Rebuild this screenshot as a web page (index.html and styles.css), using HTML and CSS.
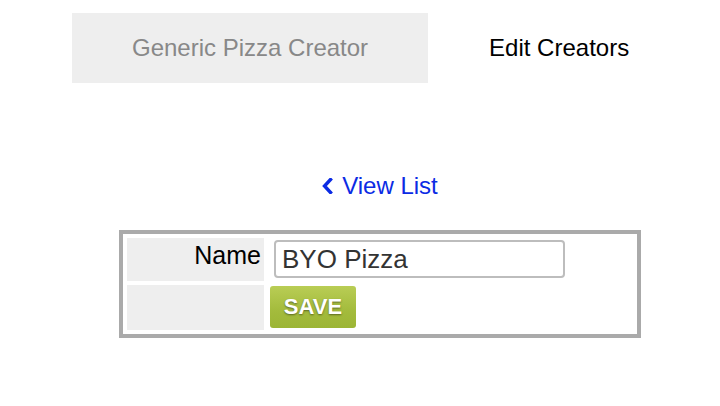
FILE: index.html
```html
<!DOCTYPE html>
<html>
<head>
<meta charset="utf-8">
<link rel="stylesheet" href="styles.css">
</head>
<body>
<div class="page">
  <nav class="tabs">
    <a class="tab tab-inactive">Generic Pizza Creator</a>
    <a class="tab tab-active">Edit Creators</a>
  </nav>
  <div class="back-row">
    <a class="back-link"><svg class="chev" width="11" height="16" viewBox="0 0 11 16"><path d="M8.5 1.5 L2.5 8 L8.5 14.5" fill="none" stroke="currentColor" stroke-width="3.4" stroke-linecap="square" stroke-linejoin="miter"/></svg>View List</a>
  </div>
  <table class="form-table">
    <tr class="row-name">
      <td class="label-cell">Name</td>
      <td class="field-cell"><input class="text-input" type="text" value="BYO Pizza"></td>
    </tr>
    <tr class="row-save">
      <td class="label-cell"></td>
      <td class="field-cell"><button class="save-btn">SAVE</button></td>
    </tr>
  </table>
</div>
</body>
</html>
```
FILE: styles.css
```css
html, body {
  margin: 0;
  padding: 0;
  background: #fff;
}
body {
  font-family: "Liberation Sans", Arial, sans-serif;
}
.page {
  margin-left: 72px;
  width: 616px;
  padding-top: 13px;
}
.tabs {
  display: flex;
}
.tab {
  display: block;
  padding: 0 60px;
  height: 70px;
  line-height: 70px;
  font-size: 24px;
  text-decoration: none;
  white-space: nowrap;
}
.tab-inactive {
  background: #eeeeee;
  color: #888888;
}
.tab-active {
  color: #000;
  padding-left: 61px;
}
.back-row {
  margin-top: 89px;
  text-align: center;
  height: 28px;
  line-height: 28px;
}
.back-link {
  font-size: 24px;
  color: #0b2be4;
  text-decoration: none;
  display: inline-flex;
  align-items: center;
}
.chev {
  margin-right: 9px;
  margin-top: -1px;
}
.form-table {
  margin: 30px auto 0;
  width: 522px;
  border: 4px solid #aaaaaa;
  border-spacing: 4px;
}
.form-table td {
  padding: 0;
}
.label-cell {
  width: 137px;
  background: #eeeeee;
  text-align: right;
  vertical-align: top;
  font-size: 25px;
  color: #000;
  padding: 3px 3px 0 0 !important;
  box-sizing: border-box;
}
.row-name td {
  height: 43px;
}
.row-save td {
  height: 45px;
}
.field-cell {
  vertical-align: top;
}
.text-input {
  display: block;
  margin: 2px 0 0 6px;
  width: 291px;
  height: 38px;
  box-sizing: border-box;
  border: 2px solid #bdbdbd;
  border-radius: 4px;
  padding: 0 0 0 6px;
  font-family: "Liberation Sans", Arial, sans-serif;
  font-size: 26px;
  color: #333333;
  outline: none;
  background: #fff;
}
.save-btn {
  display: block;
  margin: 1px 0 0 2px;
  width: 86px;
  height: 42px;
  border: none;
  border-radius: 3px;
  background: linear-gradient(#b9cd55, #a3bb3c 60%, #9cb535);
  color: #fff;
  font-family: "Liberation Sans", Arial, sans-serif;
  font-weight: bold;
  font-size: 22px;
  text-shadow: 0 1px 2px rgba(0,0,0,0.45);
  padding: 0;
}
```
